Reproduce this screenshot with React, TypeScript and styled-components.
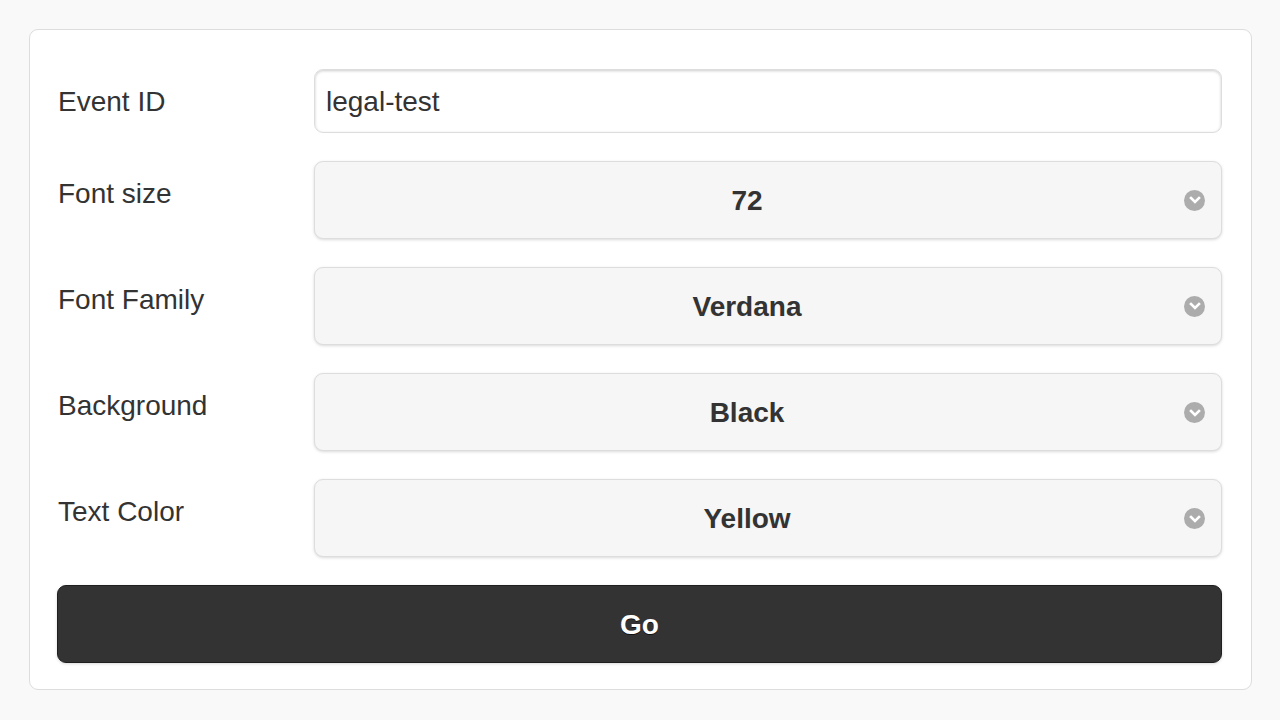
import styled, { createGlobalStyle } from "styled-components";

const GlobalStyle = createGlobalStyle`
    html, body {
        margin: 0;
        padding: 0;
        background: #f9f9f9;
    }
    body {
        font-family: "Liberation Sans", Arial, sans-serif;
        color: #333;
    }
`;

const Page = styled.div`
    padding: 29px 28px 29px 29px;
    min-height: 720px;
    box-sizing: border-box;
`;

const Card = styled.form`
    background: #fff;
    border: 1px solid #ddd;
    border-radius: 9px;
    padding: 39px 29px 25.5px 27px;
    display: flex;
    flex-direction: column;
    gap: 28.5px;
`;

const Row = styled.div`
    display: grid;
    grid-template-columns: 257px 1fr;
    align-items: start;
`;

const Label = styled.label`
    font-size: 28px;
    line-height: 40px;
    padding-top: 13px;
    padding-left: 1px;
    color: #333;
`;

const TextInput = styled.input`
    box-sizing: border-box;
    width: 100%;
    height: 63.6px;
    margin: 0;
    padding: 2px 11px 0;
    font-family: "Liberation Sans", Arial, sans-serif;
    font-size: 28px;
    color: #333;
    background: #fff;
    border: 1px solid #ddd;
    border-radius: 9px;
    box-shadow: inset 0 1px 3px rgba(0, 0, 0, 0.2);
    outline: none;
`;

const SelectButton = styled.div`
    position: relative;
    box-sizing: border-box;
    height: 77.6px;
    padding: 2px 69px 0 27px;
    display: flex;
    align-items: center;
    justify-content: center;
    font-size: 28px;
    font-weight: bold;
    color: #333;
    text-shadow: 0 1px 0 #f3f3f3;
    background: #f6f6f6;
    border: 1px solid #ddd;
    border-radius: 9px;
    box-shadow: 0 1px 3px rgba(0, 0, 0, 0.15);
`;

const Arrow = styled.span`
    position: absolute;
    right: 16px;
    top: 50%;
    margin-top: -10px;
    width: 21px;
    height: 21px;
    border-radius: 50%;
    background: rgba(0, 0, 0, 0.3);
    display: flex;
    align-items: center;
    justify-content: center;
`;

const GoButton = styled.button`
    box-sizing: border-box;
    width: 100%;
    height: 77.6px;
    margin: 0;
    padding-top: 3px;
    font-family: "Liberation Sans", Arial, sans-serif;
    font-size: 28px;
    font-weight: bold;
    color: #fff;
    text-shadow: 0 1px 0 #111;
    background: #333;
    border: 1px solid #1f1f1f;
    border-radius: 9px;
    box-shadow: 0 1px 3px rgba(0, 0, 0, 0.15);
    cursor: pointer;
`;

function Chevron() {
    return (
        <svg width="12" height="12" viewBox="0 0 12 12">
            <path d="M2 4 L6 8 L10 4" fill="none" stroke="#fff" strokeWidth="2.6" strokeLinecap="square" />
        </svg>
    );
}

const selects = [
    { label: "Font size", value: "72" },
    { label: "Font Family", value: "Verdana" },
    { label: "Background", value: "Black" },
    { label: "Text Color", value: "Yellow" },
];

export default function App() {
    return (
        <>
            <GlobalStyle />
            <Page>
                <Card onSubmit={(e) => e.preventDefault()}>
                    <Row>
                        <Label htmlFor="event-id">Event ID</Label>
                        <TextInput id="event-id" defaultValue="legal-test" />
                    </Row>
                    {selects.map((s) => (
                        <Row key={s.label}>
                            <Label>{s.label}</Label>
                            <SelectButton>
                                {s.value}
                                <Arrow>
                                    <Chevron />
                                </Arrow>
                            </SelectButton>
                        </Row>
                    ))}
                    <GoButton type="submit">Go</GoButton>
                </Card>
            </Page>
        </>
    );
}
